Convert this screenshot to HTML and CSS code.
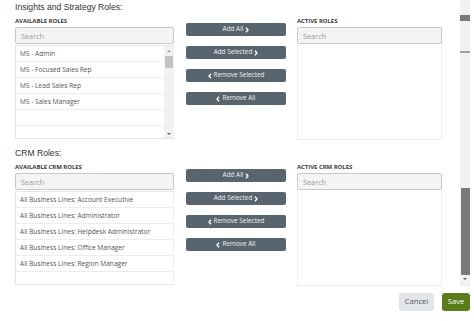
FILE: index.html
```html
<!DOCTYPE html>
<html>
<head>
<meta charset="utf-8">
<link rel="stylesheet" href="styles.css">
</head>
<body>
<div class="page">
  <div class="scroller">
    <div class="content">
      <section class="roles">
        <h2 class="heading">Insights and Strategy Roles:</h2>
        <div class="grid">
          <div class="col">
            <div class="label">AVAILABLE ROLES</div>
            <input class="search" type="text" placeholder="Search">
            <div class="listbox">
              <ul class="rows">
                <li class="row">MS - Admin</li>
                <li class="row">MS - Focused Sales Rep</li>
                <li class="row">MS - Lead Sales Rep</li>
                <li class="row">MS - Sales Manager</li>
                <li class="row"></li>
                <li class="row"></li>
              </ul>
              <div class="lscroll">
                <div class="arrow up"></div>
                <div class="lthumb"></div>
                <div class="lspace"></div>
                <div class="arrow down"></div>
              </div>
            </div>
          </div>
          <div class="col btns">
            <button class="btn">Add All <svg class="chev" viewBox="0 0 4 6"><path d="M1 0.8 L3 3 L1 5.2"/></svg></button>
            <button class="btn">Add Selected <svg class="chev" viewBox="0 0 4 6"><path d="M1 0.8 L3 3 L1 5.2"/></svg></button>
            <button class="btn"><svg class="chev" viewBox="0 0 4 6"><path d="M3 0.8 L1 3 L3 5.2"/></svg> Remove Selected</button>
            <button class="btn"><svg class="chev" viewBox="0 0 4 6"><path d="M3 0.8 L1 3 L3 5.2"/></svg> Remove All</button>
          </div>
          <div class="col">
            <div class="label">ACTIVE ROLES</div>
            <input class="search" type="text" placeholder="Search">
            <div class="activebox"></div>
          </div>
        </div>
      </section>
      <section class="roles second">
        <h2 class="heading">CRM Roles:</h2>
        <div class="grid">
          <div class="col">
            <div class="label">AVAILABLE CRM ROLES</div>
            <input class="search" type="text" placeholder="Search">
            <div class="listbox plain">
              <ul class="rows">
                <li class="row">All Business Lines: Account Executive</li>
                <li class="row">All Business Lines: Administrator</li>
                <li class="row">All Business Lines: Helpdesk Administrator</li>
                <li class="row">All Business Lines: Office Manager</li>
                <li class="row">All Business Lines: Region Manager</li>
                <li class="row last"></li>
              </ul>
            </div>
          </div>
          <div class="col btns">
            <button class="btn">Add All <svg class="chev" viewBox="0 0 4 6"><path d="M1 0.8 L3 3 L1 5.2"/></svg></button>
            <button class="btn">Add Selected <svg class="chev" viewBox="0 0 4 6"><path d="M1 0.8 L3 3 L1 5.2"/></svg></button>
            <button class="btn"><svg class="chev" viewBox="0 0 4 6"><path d="M3 0.8 L1 3 L3 5.2"/></svg> Remove Selected</button>
            <button class="btn"><svg class="chev" viewBox="0 0 4 6"><path d="M3 0.8 L1 3 L3 5.2"/></svg> Remove All</button>
          </div>
          <div class="col">
            <div class="label">ACTIVE CRM ROLES</div>
            <input class="search" type="text" placeholder="Search">
            <div class="activebox"></div>
          </div>
        </div>
      </section>
    </div>
    <div class="vbar">
      <div class="vseg s1"></div>
      <div class="vseg dark s2"></div>
      <div class="vseg s3"></div>
      <div class="vseg line"></div>
      <div class="vseg s4"></div>
      <div class="vseg thumb"></div>
      <div class="vseg s5"><div class="arrow down"></div></div>
    </div>
  </div>
  <div class="footer">
    <button class="fbtn cancel">Cancel</button>
    <button class="fbtn save">Save</button>
  </div>
</div>
</body>
</html>
```

FILE: styles.css
```css
* { box-sizing: border-box; }
html, body { margin: 0; padding: 0; background: #fff; }
body { width: 474px; height: 321px; overflow: hidden; font-family: "Open Sans", "Liberation Sans", sans-serif; }

.page { display: flex; flex-direction: column; width: 474px; height: 321px; }
.scroller { display: flex; height: 287px; }
.content { width: 460px; padding-left: 15px; }

.roles { height: 146px; }
.heading {
  margin: 0; height: 16px; padding-top: 0;
  font-family: "Liberation Sans", Arial, sans-serif;
  font-weight: normal; font-size: 8.6px; line-height: 14px; color: #333;
}
.grid { display: grid; grid-template-columns: 159px 100px 144px; column-gap: 12px; }
.grid > .col:last-child { margin-left: -1px; }
.col { display: flex; flex-direction: column; }

.label {
  height: 11px; font-size: 6px; line-height: 11px; font-weight: 700;
  letter-spacing: -0.05px; color: #3a3a3a; white-space: nowrap;
}
.search {
  display: block; width: 100%; height: 17px; margin: 0; padding: 0 0 0 5px;
  border: 1px solid #c9c9c9; border-radius: 2px; background: #f4f4f4;
  font-family: "Open Sans", sans-serif; font-size: 7.3px; color: #555; outline: none;
}
.search::placeholder { color: #9a9a9a; }

.listbox {
  display: flex; margin-top: 1px; height: 94px;
  border: 1px solid #e6e6e6; border-right: 0; overflow: hidden;
}
.listbox.plain { border-right: 1px solid #eeeeee; }
.rows { list-style: none; margin: 0; padding: 0; flex: 1; min-width: 0; }
.row {
  height: 16px; line-height: 15px; padding-left: 4px; border-bottom: 1px solid #ececec;
  font-size: 6.6px; color: #555; white-space: nowrap;
}
.row.last { border-bottom: 0; }

.lscroll { width: 10px; display: flex; flex-direction: column; background: #f1f1f1; }
.lthumb { height: 12px; margin: 1px 1px 0; background: #c3c3c3; }
.lspace { flex: 1; }
.arrow { width: 10px; height: 9px; display: flex; align-items: center; justify-content: center; }
.arrow::before { content: ""; border-left: 2px solid transparent; border-right: 2px solid transparent; }
.arrow.up::before { border-bottom: 2.5px solid #9a9a9a; }
.arrow.down::before { border-top: 2.5px solid #666; }

.btns { padding-top: 7px; gap: 10px; }
.btn {
  display: flex; align-items: center; justify-content: center; gap: 2px;
  height: 13px; width: 100%; margin: 0; padding: 0;
  border: 0; border-radius: 2px; background: #58656f; color: #eef1f3;
  font-family: "Open Sans", sans-serif; font-size: 6.4px; line-height: 1;
}
.chev { width: 4px; height: 6px; fill: none; stroke: #fff; stroke-width: 1.3; }

.activebox { margin-top: 1px; height: 95px; border: 1px solid #eeeeee; border-top: 0; }

.vbar { width: 10px; display: flex; flex-direction: column; background: #f1f1f1; }
.vseg { flex: none; }
.s1 { height: 15px; }
.dark { height: 6px; background: #7b7b7b; }
.s3 { height: 30px; }
.line { height: 1.5px; background: #9e9e9e; }
.s4 { height: 135.5px; }
.thumb { height: 87px; background: #7a7a7a; margin: 0 0.5px; }
.s5 { height: 12px; display: flex; justify-content: center; padding-top: 0; }
.s5 .arrow { height: 8px; }

.footer { display: flex; justify-content: flex-end; gap: 8px; padding: 6px 4px 0 0; }
.fbtn {
  height: 18px; margin: 0; padding: 0; border: 0; border-radius: 3px;
  font-family: "Open Sans", sans-serif; font-size: 7.6px; line-height: 1;
}
.cancel { width: 35px; background: #e2e5ea; color: #555; }
.save { width: 28px; background: #5b7c1b; color: #fff; }
```
